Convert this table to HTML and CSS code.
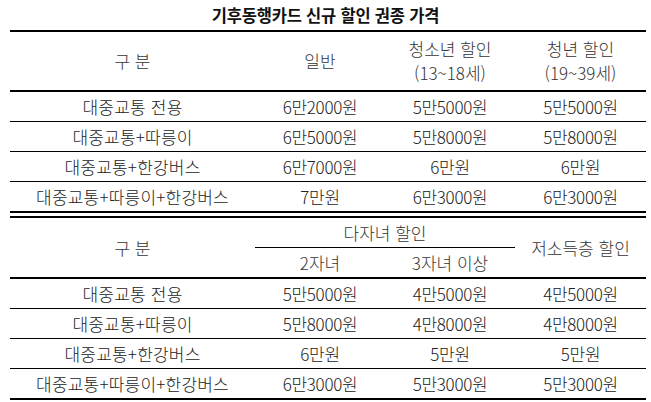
FILE: index.html
```html
<!DOCTYPE html>
<html lang="ko">
<head>
<meta charset="utf-8">
<link rel="stylesheet" href="styles.css">
</head>
<body>
<div class="page">
  <h1 class="title">기후동행카드 신규 할인 권종 가격</h1>
  <table class="price first">
    <colgroup><col class="c1"><col class="c2"><col class="c3"><col class="c4"></colgroup>
    <thead>
      <tr class="head-one">
        <th>구 분</th>
        <th>일반</th>
        <th>청소년 할인<br>(13~18세)</th>
        <th>청년 할인<br>(19~39세)</th>
      </tr>
    </thead>
    <tbody>
      <tr><td>대중교통 전용</td><td>6만2000원</td><td>5만5000원</td><td>5만5000원</td></tr>
      <tr><td>대중교통+따릉이</td><td>6만5000원</td><td>5만8000원</td><td>5만8000원</td></tr>
      <tr><td>대중교통+한강버스</td><td>6만7000원</td><td>6만원</td><td>6만원</td></tr>
      <tr class="last"><td>대중교통+따릉이+한강버스</td><td>7만원</td><td>6만3000원</td><td>6만3000원</td></tr>
    </tbody>
  </table>
  <table class="price second">
    <colgroup><col class="c1"><col class="c2"><col class="c3"><col class="c4"></colgroup>
    <thead>
      <tr>
        <th rowspan="2" class="tall">구 분</th>
        <th colspan="2" class="group">다자녀 할인</th>
        <th rowspan="2" class="tall">저소득층 할인</th>
      </tr>
      <tr>
        <th class="sub">2자녀</th>
        <th class="sub">3자녀 이상</th>
      </tr>
    </thead>
    <tbody>
      <tr><td>대중교통 전용</td><td>5만5000원</td><td>4만5000원</td><td>4만5000원</td></tr>
      <tr><td>대중교통+따릉이</td><td>5만8000원</td><td>4만8000원</td><td>4만8000원</td></tr>
      <tr><td>대중교통+한강버스</td><td>6만원</td><td>5만원</td><td>5만원</td></tr>
      <tr class="last"><td>대중교통+따릉이+한강버스</td><td>6만3000원</td><td>5만3000원</td><td>5만3000원</td></tr>
    </tbody>
  </table>
</div>
</body>
</html>
```

FILE: styles.css
```css
html, body {
  margin: 0;
  padding: 0;
  background: #ffffff;
}

.page {
  width: 651px;
  font-family: "Noto Sans CJK KR", "Noto Sans", sans-serif;
  color: #222222;
}

.title {
  margin: 0;
  height: 30px;
  line-height: 30px;
  font-size: 16.5px;
  font-weight: 700;
  color: #111111;
  text-align: center;
  letter-spacing: -0.2px;
}

.price {
  margin-left: 10px;
  width: 636px;
  border-collapse: separate;
  border-spacing: 0;
  table-layout: fixed;
  border-top: 2px solid #000000;
  font-size: 17px;
  font-weight: 300;
}

.second {
  margin-top: 3px;
}

.c1 { width: 245px; }
.c2 { width: 130px; }
.c3 { width: 130px; }
.c4 { width: 131px; }

.price th,
.price td {
  padding: 0;
  text-align: center;
  vertical-align: middle;
  font-weight: 300;
  white-space: nowrap;
}

.price td {
  height: 29px;
  line-height: 29px;
  border-bottom: 1px solid #000000;
  letter-spacing: -0.3px;
}

.price td:first-child {
  letter-spacing: 0.2px;
}

.price tr.last td {
  border-bottom: 2px solid #000000;
}

.head-one th {
  height: 58px;
  line-height: 24px;
  border-bottom: 2px solid #000000;
  color: #333333;
}

.second th {
  color: #333333;
  line-height: 29px;
}

.second th.group {
  height: 29px;
  border-bottom: 1px solid #000000;
}

.second th.sub {
  height: 29px;
  border-bottom: 2px solid #000000;
}

.second th.tall {
  border-bottom: 2px solid #000000;
}
```
